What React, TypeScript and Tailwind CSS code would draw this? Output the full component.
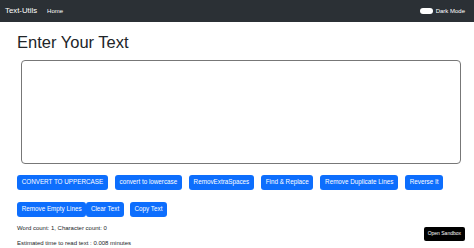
import { useState } from "react";

export default function App() {
  const [text, setText] = useState("");

  const words = text.split(/\s+/).filter((w) => w.length > 0).length;

  const btn =
    "bg-[#0d6efd] text-white rounded-[3px] h-[15px] px-[4.7px] text-[6.3px] leading-none";

  return (
    <div
      className="w-[474px] h-[248px] bg-white text-[#212529] overflow-hidden relative"
      style={{ fontFamily: '"Liberation Sans", Arial, sans-serif' }}
    >
      <nav className="h-[22px] bg-[#2b3035] flex items-center px-[5px]">
        <span className="text-white text-[7.8px]">Text-Utils</span>
        <span className="text-white text-[6px] ml-[10px]">Home</span>
        <div className="ml-auto flex items-center gap-[3px] pr-[4px]">
          <span className="w-[13px] h-[6px] rounded-full bg-white inline-block" />
          <span className="text-white text-[6px]">Dark Mode</span>
        </div>
      </nav>

      <div className="px-[17px]">
        <h1 className="text-[16.5px] font-normal mt-[10px] leading-[20px]">Enter Your Text</h1>
        <textarea
          className="block mx-[4px] mt-[8px] w-[440px] h-[104px] border-[1.5px] border-[#777] rounded-[4px] resize-none outline-none"
          value={text}
          onChange={(e) => setText(e.target.value)}
        />

        <div className="flex gap-[7px] mt-[11px]">
          <button className={btn}>CONVERT TO UPPERCASE</button>
          <button className={btn}>convert to lowercase</button>
          <button className={btn}>RemovExtraSpaces</button>
          <button className={btn}>Find &amp; Replace</button>
          <button className={btn}>Remove Duplicate Lines</button>
          <button className={btn}>Reverse It</button>
        </div>

        <div className="flex mt-[12px]">
          <button className={btn}>Remove Empty Lines</button>
          <button className={btn}>Clear Text</button>
          <button className={btn + " ml-[6px]"}>Copy Text</button>
        </div>

        <p className="text-[6px] leading-[7px] mt-[8px]">
          Word count: {words || 1}, Character count: {text.length}
        </p>
        <p className="text-[6px] leading-[7px] mt-[8px]">
          Estimated time to read text : {(0.008 * (words || 1)).toFixed(3)} minutes
        </p>
      </div>

      <button className="absolute right-[9px] top-[227px] bg-black text-white text-[5px] h-[14px] px-[4px] rounded-[2px]">
        Open Sandbox
      </button>
    </div>
  );
}
